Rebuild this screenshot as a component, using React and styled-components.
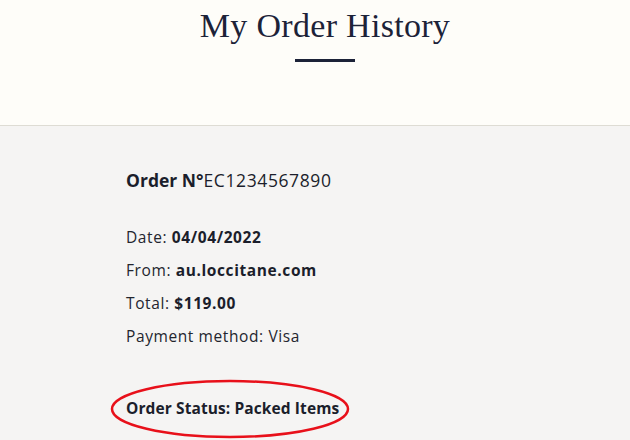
import React from 'react';
import styled, { createGlobalStyle } from 'styled-components';

const GlobalStyle = createGlobalStyle`
  html, body {
    margin: 0;
    padding: 0;
    background-color: #f5f4f3;
  }
  body {
    font-family: "Open Sans", Lato, sans-serif;
    color: #1b1e2b;
  }
`;

const Page = styled.div`
  width: 630px;
  height: 440px;
  overflow: hidden;
  background-color: #f5f4f3;
`;

const Header = styled.header`
  height: 126px;
  background-color: #fefdf9;
  border-bottom: 1px solid #dedcd4;
  display: flex;
  flex-direction: column;
  align-items: center;
  padding: 6px 0 0 20px;
  box-sizing: border-box;
`;

const Title = styled.h1`
  margin: 0;
  font-family: "Liberation Serif", serif;
  font-weight: 400;
  font-size: 34px;
  line-height: 40px;
  color: #1c2238;
  letter-spacing: 0.3px;
`;

const Rule = styled.div`
  width: 60px;
  height: 3px;
  background-color: #1c2238;
  margin-top: 13px;
`;

const Content = styled.section`
  padding: 42px 0 0 126px;
`;

const OrderNumber = styled.h2`
  margin: 0 0 29px;
  font-size: 17.5px;
  font-weight: 400;
  line-height: 24px;
  letter-spacing: 0.6px;

  strong {
    font-weight: 700;
    letter-spacing: 0;
  }
`;

const Line = styled.p`
  margin: 0;
  font-size: 15.5px;
  line-height: 33px;
  font-weight: 400;
  letter-spacing: 0.6px;
  color: #23252e;

  strong {
    font-weight: 700;
    color: #1b1e2b;
  }
`;

const Status = styled.p`
  position: relative;
  display: inline-block;
  margin: 43px 0 0;
  font-size: 15.5px;
  font-weight: 700;
  line-height: 24px;
  letter-spacing: 0.1px;
`;

const Ellipse = styled.svg`
  position: absolute;
  left: -16px;
  top: -17px;
  width: 240px;
  height: 60px;
  overflow: visible;
`;

export default function App() {
  return (
    <Page>
      <GlobalStyle />
      <Header>
        <Title>My Order History</Title>
        <Rule />
      </Header>
      <Content>
        <OrderNumber>
          <strong>Order N°</strong>EC1234567890
        </OrderNumber>
        <Line>
          Date: <strong>04/04/2022</strong>
        </Line>
        <Line>
          From: <strong>au.loccitane.com</strong>
        </Line>
        <Line>
          Total: <strong>$119.00</strong>
        </Line>
        <Line>Payment method: Visa</Line>
        <Status>
          Order Status: Packed Items
          <Ellipse viewBox="0 0 240 60">
            <ellipse cx="120" cy="30" rx="118" ry="28" fill="none" stroke="#e8101a" strokeWidth="2.5" />
          </Ellipse>
        </Status>
      </Content>
    </Page>
  );
}
